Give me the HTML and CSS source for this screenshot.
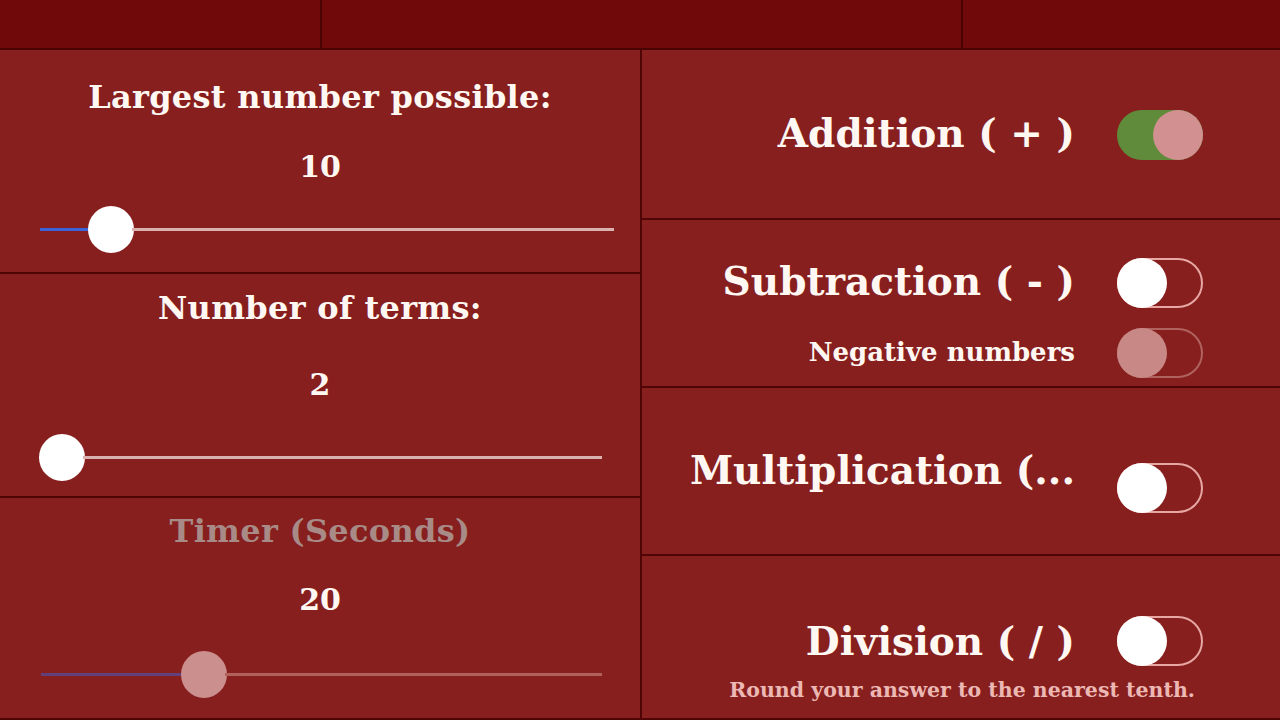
FILE: index.html
```html
<!DOCTYPE html>
<html>
<head>
<meta charset="utf-8">
<link rel="stylesheet" href="styles.css">
</head>
<body>
<div class="topbar">
  <div class="tab tab-a"></div>
  <div class="tab tab-b"></div>
  <div class="tab tab-c"></div>
</div>
<div class="main">
  <div class="col-left">
    <section class="setting s1">
      <div class="title">Largest number possible:</div>
      <div class="value">10</div>
      <div class="slider slider-long">
        <div class="fill" style="width:50px"></div>
        <div class="thumb"></div>
        <div class="rest"></div>
      </div>
    </section>
    <section class="setting s2">
      <div class="title">Number of terms:</div>
      <div class="value">2</div>
      <div class="slider">
        <div class="thumb"></div>
        <div class="rest"></div>
      </div>
    </section>
    <section class="setting s3 disabled">
      <div class="title muted">Timer (Seconds)</div>
      <div class="value">20</div>
      <div class="slider">
        <div class="fill" style="width:142px"></div>
        <div class="thumb"></div>
        <div class="rest"></div>
      </div>
    </section>
  </div>
  <div class="col-right">
    <section class="op op1">
      <div class="row">
        <div class="label">Addition ( + )</div>
        <div class="toggle on"><div class="knob"></div></div>
      </div>
    </section>
    <section class="op op2">
      <div class="row">
        <div class="label">Subtraction ( - )</div>
        <div class="toggle"><div class="knob"></div></div>
      </div>
      <div class="row sub-row">
        <div class="label small">Negative numbers</div>
        <div class="toggle faded"><div class="knob"></div></div>
      </div>
    </section>
    <section class="op op3">
      <div class="row row-high">
        <div class="label">Multiplication (...</div>
        <div class="toggle"><div class="knob"></div></div>
      </div>
    </section>
    <section class="op op4">
      <div class="row">
        <div class="label">Division ( / )</div>
        <div class="toggle"><div class="knob"></div></div>
      </div>
      <div class="note">Round your answer to the nearest tenth.</div>
    </section>
  </div>
</div>
</body>
</html>
```

FILE: styles.css
```css
* { box-sizing: border-box; }
html, body { margin: 0; padding: 0; }
body {
  width: 1280px;
  height: 720px;
  overflow: hidden;
  background: #871f1f;
  font-family: "DejaVu Serif", "Liberation Serif", serif;
  font-weight: bold;
  color: #fff8f2;
}
.topbar {
  display: grid;
  grid-template-columns: 322px 641px 1fr;
  height: 50px;
  background: #700a0a;
  border-bottom: 2px solid #4a0303;
}
.tab { border-right: 2px solid #4a0303; }
.tab-c { border-right: none; }

.main {
  display: grid;
  grid-template-columns: 642px 1fr;
  height: 670px;
}
.col-left {
  display: flex;
  flex-direction: column;
  border-right: 2px solid #4f0505;
}
.setting {
  display: flex;
  flex-direction: column;
  align-items: center;
  border-bottom: 2px solid #4f0505;
}
.s1 { height: 224px; padding-top: 28px; }
.s2 { height: 224px; padding-top: 15px; }
.s3 { height: 222px; padding-top: 14px; }

.title {
  font-size: 32px;
  line-height: 38px;
  letter-spacing: 0.3px;
}
.title.muted { color: #a88a86; }
.value {
  font-size: 30px;
  line-height: 38px;
}
.s1 .value { margin-top: 32px; }
.s2 .value { margin-top: 39px; }
.s3 .value { margin-top: 31px; }

.slider {
  align-self: stretch;
  display: flex;
  align-items: center;
  padding: 0 38px 0 39px;
  height: 48px;
}
.s1 .slider { margin-top: 19px; padding-left: 40px; padding-right: 26px; }
.s2 .slider { margin-top: 29px; }
.s3 .slider { margin-top: 31px; padding-left: 41px; }
.fill {
  height: 3px;
  background: #3d63d8;
  margin-right: -2px;
}
.thumb {
  width: 46px;
  height: 47px;
  border-radius: 50%;
  background: #ffffff;
  flex: none;
}
.rest {
  flex: 1;
  height: 3px;
  background: #d9b2b0;
  margin-left: -2px;
}
.disabled .fill { background: #62407c; }
.disabled .thumb { background: #cb8f8d; }
.disabled .rest { background: #b2605c; }

.col-right {
  display: flex;
  flex-direction: column;
}
.op {
  display: flex;
  flex-direction: column;
  align-items: flex-end;
  padding-right: 77px;
  border-bottom: 2px solid #4f0505;
}
.op1 { height: 170px; padding-top: 60px; }
.op2 { height: 168px; padding-top: 38px; }
.op3 { height: 168px; padding-top: 75px; }
.op4 { height: 164px; padding-top: 60px; }

.row {
  display: flex;
  align-items: center;
  gap: 42px;
}
.op1 .label { margin-bottom: 5px; }
.op2 .row .label { margin-bottom: 4px; }
.sub-row { margin-top: 20px; }
.row-high { align-items: flex-start; }
.row-high .label { margin-top: -15px; }

.label {
  font-size: 39px;
  line-height: 44px;
  white-space: nowrap;
}
.op2 .sub-row .label.small,
.label.small {
  font-size: 26px;
  line-height: 30px;
  margin-bottom: 2px;
}
.note {
  margin-top: 12px;
  margin-right: 8px;
  font-size: 20.5px;
  line-height: 24px;
  color: #ecb8b4;
}

.toggle {
  width: 86px;
  height: 50px;
  border-radius: 25px;
  border: 2px solid #e7a7a3;
  display: flex;
  align-items: center;
  flex: none;
}
.knob {
  width: 50px;
  height: 50px;
  margin-left: -2px;
  border-radius: 50%;
  background: #ffffff;
}
.toggle.on {
  background: #5f8b3b;
  border-color: #5f8b3b;
  justify-content: flex-end;
}
.toggle.on .knob {
  background: #d39090;
  margin-left: 0;
  margin-right: -2px;
}
.toggle.faded { border-color: #b0625e; }
.toggle.faded .knob { background: #c88886; }
```
